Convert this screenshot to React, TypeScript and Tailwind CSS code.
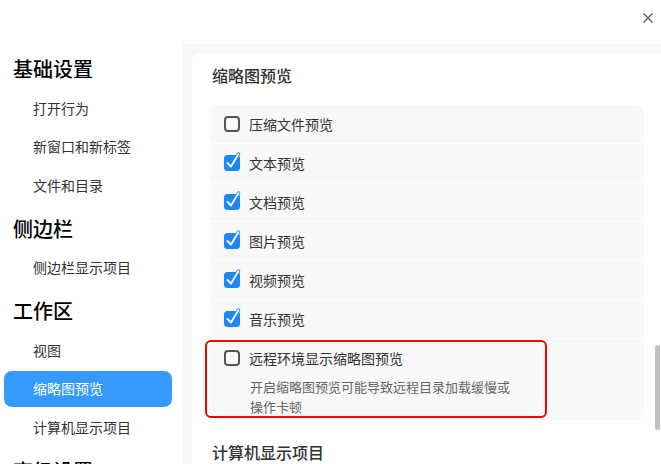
import React from 'react'

const font = { fontFamily: '"Noto Sans CJK SC", "Noto Sans", sans-serif' }

type NavEntry = { kind: 'heading' | 'item'; label: string; active?: boolean }

const nav: NavEntry[] = [
  { kind: 'heading', label: '基础设置' },
  { kind: 'item', label: '打开行为' },
  { kind: 'item', label: '新窗口和新标签' },
  { kind: 'item', label: '文件和目录' },
  { kind: 'heading', label: '侧边栏' },
  { kind: 'item', label: '侧边栏显示项目' },
  { kind: 'heading', label: '工作区' },
  { kind: 'item', label: '视图' },
  { kind: 'item', label: '缩略图预览', active: true },
  { kind: 'item', label: '计算机显示项目' },
  { kind: 'heading', label: '高级设置' },
]

const options = [
  { label: '压缩文件预览', checked: false },
  { label: '文本预览', checked: true },
  { label: '文档预览', checked: true },
  { label: '图片预览', checked: true },
  { label: '视频预览', checked: true },
  { label: '音乐预览', checked: true },
]

const Checkbox: React.FC<{ checked: boolean }> = ({ checked }) => {
  if (!checked) {
    return <div className="w-4 h-4 shrink-0 rounded-[4px] border-2 border-[#555555]" />
  }
  return (
    <svg width="16" height="16" viewBox="0 0 16 16" className="shrink-0 overflow-visible">
      <rect x="0" y="0" width="16" height="16" rx="3.5" fill="#1f87f5" />
      <path d="M3.5 8 L7 11.5 L14.5 -1" fill="none" stroke="#1f87f5" strokeWidth="3.5" strokeLinecap="round" strokeLinejoin="round" />
      <path d="M3.5 8 L7 11.5 L14.5 -1" fill="none" stroke="#ffffff" strokeWidth="1.8" strokeLinecap="round" strokeLinejoin="round" />
    </svg>
  )
}

const Sidebar: React.FC = () => (
  <div className="w-[183px] shrink-0 bg-white pt-[45px] pl-[4px] pr-[11px]">
    {nav.map((n) =>
      n.kind === 'heading' ? (
        <div key={n.label} className="h-[44px] pt-[4px] pl-[9px] flex items-center text-[20px] font-medium text-black">
          {n.label}
        </div>
      ) : (
        <div key={n.label} className="h-[38.5px] py-[1px]">
          <div
            className={
              'h-full rounded-lg pl-[29px] flex items-center text-[14px] ' +
              (n.active ? 'bg-[#349aff] text-white' : 'text-[#333333]')
            }
          >
            {n.label}
          </div>
        </div>
      )
    )}
  </div>
)

export default function App() {
  return (
    <div className="w-[661px] h-[464px] overflow-hidden flex bg-white relative" style={font}>
      <Sidebar />
      <div className="flex-1 flex flex-col min-w-0">
        {/* 标题栏 */}
        <div className="h-[44px] shrink-0 bg-white flex items-start justify-end pr-[8px] pt-[13px]">
          <svg width="10" height="10" viewBox="0 0 10 10">
            <path d="M0.5 0.5 L9.5 9.5 M9.5 0.5 L0.5 9.5" stroke="#555555" strokeWidth="1.2" />
          </svg>
        </div>
        <div className="flex-1 bg-[#f7f7f7] pl-[9px] pt-[9px]">
          <div className="bg-white rounded-tl-lg h-full pl-[18px]">
            <div className="h-[44px] pl-[2px] flex items-center text-[16px] font-medium text-[#333333]">
              缩略图预览
            </div>
            <div className="mt-[8px] w-[434px] rounded-lg bg-[#f8f8f8]">
              {options.map((o) => (
                <div key={o.label} className="h-[39px] border-b border-white pl-[14px] flex items-center gap-[9px]">
                  <Checkbox checked={o.checked} />
                  <span className="text-[14px] text-[#333333]">{o.label}</span>
                </div>
              ))}
              <div className="relative pl-[14px] pb-[3px]">
                <div className="h-[38px] flex items-center gap-[9px]">
                  <Checkbox checked={false} />
                  <span className="text-[14px] text-[#333333]">远程环境显示缩略图预览</span>
                </div>
                <div className="pl-[26px] w-[300px] text-[13px] leading-[20px] text-[#666666]">
                  开启缩略图预览可能导致远程目录加载缓慢或
                  <br />
                  操作卡顿
                </div>
                {/* 红色标注框 */}
                <div className="absolute left-[-5px] top-[1px] w-[342px] h-[78px] rounded-[6px] border-2 border-[#ff0000]" />
              </div>
            </div>
            <div className="mt-[10px] h-[44px] pl-[2px] flex items-center text-[16px] font-medium text-[#333333]">
              计算机显示项目
            </div>
          </div>
        </div>
      </div>
      {/* 滚动条 */}
      <div className="absolute left-[655px] top-[345px] w-[5px] h-[85px] rounded-full bg-[#c0c0c0]" />
    </div>
  )
}
